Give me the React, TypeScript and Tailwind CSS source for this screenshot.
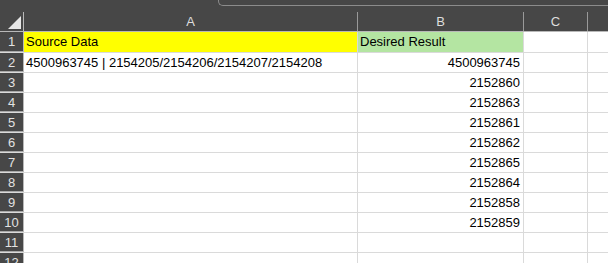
const rows: { a?: string; b?: string; fill?: boolean }[] = [
  { a: "Source Data", b: "Desired Result", fill: true },
  { a: "4500963745 | 2154205/2154206/2154207/2154208", b: "4500963745" },
  { b: "2152860" },
  { b: "2152863" },
  { b: "2152861" },
  { b: "2152862" },
  { b: "2152865" },
  { b: "2152864" },
  { b: "2152858" },
  { b: "2152859" },
  {},
  {},
];

function SelectAll() {
  return (
    <svg viewBox="0 0 24 20" className="h-[20px] w-[24px]" aria-hidden="true">
      <polygon points="8,17 21,4 21,17" fill="#e6e6e6" />
    </svg>
  );
}

export default function App() {
  return (
    <div className="h-[263px] w-[608px] overflow-hidden bg-white font-['Liberation_Sans',Arial,sans-serif] text-[13px] text-black">
      <div className="h-[12px] bg-[#474747]">
        <div className="ml-[218px] h-[6px] rounded-bl-[5px] border-b border-l border-[#8c8c8c]" />
      </div>

      <div className="flex h-[20px] border-b border-[#b8b8b8] bg-[#474747] leading-[19px] text-[#dedede]">
        <div className="w-[24px] shrink-0 border-r border-[#b8b8b8]">
          <SelectAll />
        </div>
        <div className="w-[334px] shrink-0 border-r border-[#9a9a9a] text-center">A</div>
        <div className="w-[166px] shrink-0 border-r border-[#9a9a9a] text-center">B</div>
        <div className="w-[64px] shrink-0 border-r border-[#9a9a9a] text-center">C</div>
        <div className="flex-1" />
      </div>

      {rows.map((row, i) => (
        <div key={i} className={`flex border-b border-[#dadada] ${i === 0 ? "h-[21px]" : "h-[20px]"}`}>
          <div className="w-[24px] shrink-0 border-r border-b-0 border-[#b8b8b8] bg-[#474747] text-center leading-[20px] text-[#e2e2e2] shadow-[inset_0_-1px_0_#a8a8a8]">
            {i + 1}
          </div>
          <div
            className={`w-[334px] shrink-0 whitespace-nowrap border-r border-[#dadada] pl-[2px] leading-[20px] ${
              row.fill ? "bg-[#ffff00]" : ""
            }`}
          >
            {row.a}
          </div>
          <div
            className={`w-[166px] shrink-0 whitespace-nowrap border-r border-[#dadada] leading-[20px] ${
              row.fill ? "bg-[#b4e5a2] pl-[2px] text-left" : "pr-[3px] text-right"
            }`}
          >
            {row.b}
          </div>
          <div className="w-[64px] shrink-0 border-r border-[#dadada]" />
          <div className="flex-1" />
        </div>
      ))}
    </div>
  );
}
